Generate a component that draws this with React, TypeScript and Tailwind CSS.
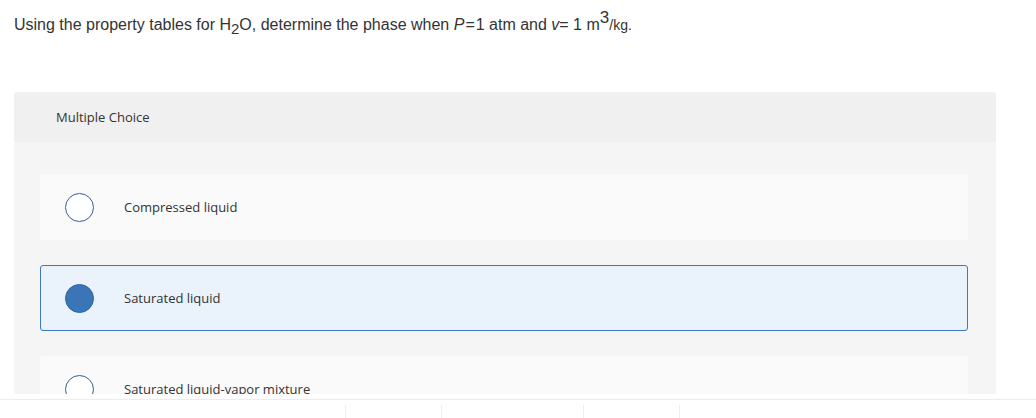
import React from "react";

const choices = [
  { label: "Compressed liquid", selected: false },
  { label: "Saturated liquid", selected: true },
  { label: "Saturated liquid-vapor mixture", selected: false },
];

export default function App() {
  return (
    <div className="relative w-[1036px] h-[418px] overflow-hidden bg-white">
      <div
        className="px-[14px] pt-[15px] h-[92px] text-[16px] leading-[20px] text-[#333]"
        style={{ fontFamily: '"Liberation Sans", Arial, sans-serif' }}
      >
        Using the property tables for H
        <span className="text-[15px] relative top-[4px] leading-[0]">2</span>O, determine the phase when{" "}
        <i>P</i>
        <span className="px-[1px]">=</span>1 atm and <i>v</i>= 1 m
        <span className="text-[17px] relative top-[-7px] leading-[0]">3</span>
        <span className="text-[14px]">/kg.</span>
      </div>
      <div
        className="mx-[14px] w-[982px] rounded-t-[3px] overflow-hidden"
        style={{ fontFamily: '"Open Sans", "Noto Sans", sans-serif' }}
      >
        <div className="h-[50px] bg-[#f0f0f0] pl-[42px] flex items-center text-[13px] text-[#333]">
          <span className="relative top-[1px]">Multiple Choice</span>
        </div>
        <div className="h-[252px] bg-[#f5f5f5] px-[26px] pt-[32px] flex flex-col gap-[25px] overflow-hidden">
          {choices.map((c) => (
            <div
              key={c.label}
              className={
                "shrink-0 h-[66px] w-[928px] rounded-[3px] flex items-center gap-[30px] text-[13px] text-[#333] " +
                (c.selected ? "bg-[#eaf2fb] border border-[#3b78c0] pl-[24px]" : "bg-[#fafafa] pl-[25px]")
              }
            >
              {c.selected ? (
                <div className="shrink-0 w-[29px] h-[29px] rounded-full bg-[#3a75b8] border border-[#2e64a3]" />
              ) : (
                <div className="shrink-0 w-[29px] h-[29px] rounded-full bg-white border-[1.5px] border-[#2f6096]" />
              )}
              <span className="relative top-[1px]">{c.label}</span>
            </div>
          ))}
        </div>
      </div>
      <div className="mt-[5px] border-t border-[#ececec] h-[20px] flex">
        <div className="w-[345px]" />
        <div className="w-[96px] border-l border-[#eeeeee] mt-[5px]" />
        <div className="w-[142px] border-l border-[#eeeeee] mt-[5px]" />
        <div className="w-[96px] border-l border-[#eeeeee] mt-[5px]" />
        <div className="flex-1 border-l border-[#eeeeee] mt-[5px]" />
      </div>
    </div>
  );
}
